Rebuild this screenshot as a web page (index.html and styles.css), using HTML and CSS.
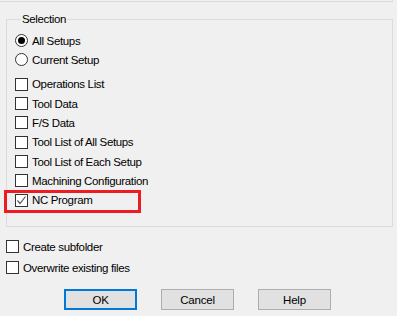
FILE: index.html
```html
<!DOCTYPE html>
<html lang="en">
<head>
    <meta charset="UTF-8">
    <title>Export Options</title>
    <link rel="stylesheet" href="styles.css">
</head>
<body>
<div class="top-panel"></div>

<fieldset class="group">
    <legend>Selection</legend>

    <div class="options radios">
        <label class="row">
            <span class="radio checked"></span>
            <span>All Setups</span>
        </label>
        <label class="row">
            <span class="radio"></span>
            <span>Current Setup</span>
        </label>
    </div>

    <div class="options checks">
        <label class="row"><span class="box"></span><span>Operations List</span></label>
        <label class="row"><span class="box"></span><span>Tool Data</span></label>
        <label class="row"><span class="box"></span><span>F/S Data</span></label>
        <label class="row"><span class="box"></span><span>Tool List of All Setups</span></label>
        <label class="row"><span class="box"></span><span>Tool List of Each Setup</span></label>
        <label class="row"><span class="box"></span><span>Machining Configuration</span></label>
        <label class="row highlight">
            <span class="box">
                <svg width="11" height="11" viewBox="0 0 11 11">
                    <polyline points="1.5,5.5 4,8.5 9.5,1.5" fill="none" stroke="#555" stroke-width="1.2"/>
                </svg>
            </span>
            <span>NC Program</span>
        </label>
    </div>
</fieldset>

<div class="extra">
    <label class="row tall"><span class="box"></span><span>Create subfolder</span></label>
    <label class="row tall"><span class="box"></span><span>Overwrite existing files</span></label>
</div>

<div class="buttons">
    <button class="btn default">OK</button>
    <button class="btn">Cancel</button>
    <button class="btn">Help</button>
</div>
</body>
</html>
```

FILE: styles.css
```css
* {
    margin: 0;
    padding: 0;
    box-sizing: border-box;
}

body {
    font-family: 'Liberation Sans', Arial, sans-serif;
    font-size: 11.5px;
    letter-spacing: -0.35px;
    color: #000;
    background-color: #f0f0f0;
    width: 397px;
    height: 316px;
    overflow: hidden;
}

.top-panel {
    height: 2px;
    margin-right: 4px;
    border-right: 1px solid #dcdcdc;
    border-bottom: 1px solid #dcdcdc;
}

.group {
    margin: 10px 4px 0 6px;
    border: 1px solid #dcdcdc;
    padding: 4px 0 15px 8px;
    height: 215px;
}

.group legend {
    margin-left: 6px;
    padding: 0 1px;
    line-height: 15px;
}

.options {
    display: flex;
    flex-direction: column;
}

.checks {
    margin-top: 5px;
}

.row {
    display: flex;
    align-items: center;
    gap: 4px;
    height: 19.33px;
    white-space: nowrap;
}

.row.tall {
    height: 21px;
}

.radio {
    width: 13px;
    height: 13px;
    border: 1px solid #333;
    border-radius: 50%;
    background: #fff;
    display: flex;
    align-items: center;
    justify-content: center;
    flex-shrink: 0;
}

.radio.checked::after {
    content: '';
    width: 7px;
    height: 7px;
    border-radius: 50%;
    background: #000;
}

.box {
    width: 13px;
    height: 13px;
    border: 1px solid #333;
    background: #fff;
    display: flex;
    align-items: center;
    justify-content: center;
    flex-shrink: 0;
}

.highlight {
    position: relative;
    width: 116px;
}

.highlight::after {
    content: '';
    position: absolute;
    left: -11px;
    right: -10px;
    top: -1px;
    bottom: -3px;
    border: 3px solid #ed1c24;
}

.extra {
    margin: 9px 0 0 6px;
    display: flex;
    flex-direction: column;
}

.buttons {
    display: flex;
    gap: 24px;
    padding-left: 64px;
    margin-top: 11px;
}

.btn {
    width: 73px;
    height: 21px;
    font-family: inherit;
    font-size: 11.5px;
    letter-spacing: -0.2px;
    color: #000;
    background: #e1e1e1;
    border: 1px solid #adadad;
}

.btn.default {
    border: 2px solid #0078d7;
}
```
